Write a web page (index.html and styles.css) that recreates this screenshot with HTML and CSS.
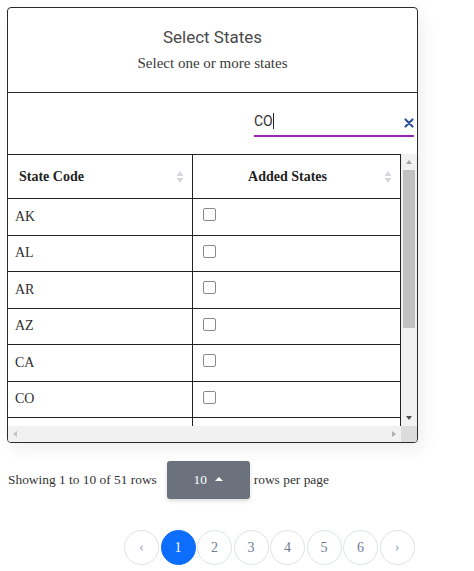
FILE: index.html
```html
<!DOCTYPE html>
<html>
<head>
<meta charset="utf-8">
<link rel="stylesheet" href="styles.css">
</head>
<body>
<div class="card">
  <div class="card-header">
    <div class="title">Select States</div>
    <div class="subtitle">Select one or more states</div>
  </div>
  <div class="search-row">
    <div class="search">
      <span class="search-text">CO<span class="caret-line"></span></span>
      <svg class="clear" width="10" height="10" viewBox="0 0 10 10"><path d="M1.5 1.5L8.5 8.5M8.5 1.5L1.5 8.5" stroke="#2f5596" stroke-width="2.2" stroke-linecap="round"/></svg>
    </div>
  </div>
  <div class="table-wrap">
    <div class="table-view">
      <table class="states">
        <thead>
          <tr>
            <th class="col-code"><span class="th-inner">State Code</span><span class="sort"><svg width="8" height="16" viewBox="0 0 8 16"><path d="M4 2L7.5 7H0.5Z" fill="#d3d6da"/><path d="M4 14L7.5 9H0.5Z" fill="#d3d6da"/></svg></span></th>
            <th class="col-added"><span class="th-inner">Added States</span><span class="sort"><svg width="8" height="16" viewBox="0 0 8 16"><path d="M4 2L7.5 7H0.5Z" fill="#d3d6da"/><path d="M4 14L7.5 9H0.5Z" fill="#d3d6da"/></svg></span></th>
          </tr>
        </thead>
        <tbody>
          <tr><td>AK</td><td><span class="cb"></span></td></tr>
          <tr><td>AL</td><td><span class="cb"></span></td></tr>
          <tr><td>AR</td><td><span class="cb"></span></td></tr>
          <tr><td>AZ</td><td><span class="cb"></span></td></tr>
          <tr><td>CA</td><td><span class="cb"></span></td></tr>
          <tr><td>CO</td><td><span class="cb"></span></td></tr>
          <tr><td></td><td></td></tr>
        </tbody>
      </table>
    </div>
    <div class="vscroll">
      <div class="arrow up"></div>
      <div class="thumb"></div>
      <div class="track"></div>
      <div class="arrow down"></div>
    </div>
    <div class="hscroll">
      <div class="arrow left"></div>
      <div class="arrow right"></div>
    </div>
    <div class="corner"></div>
  </div>
</div>

<div class="footer">
  <span class="showing">Showing 1 to 10 of 51 rows</span>
  <button class="page-size">10 <span class="up-caret"></span></button>
  <span class="per-page">rows per page</span>
</div>

<div class="pagination">
  <span class="page nav">&lsaquo;</span>
  <span class="page active">1</span>
  <span class="page">2</span>
  <span class="page">3</span>
  <span class="page">4</span>
  <span class="page">5</span>
  <span class="page">6</span>
  <span class="page nav">&rsaquo;</span>
</div>
</body>
</html>
```

FILE: styles.css
```css
html, body {
  margin: 0;
  padding: 0;
  background: #ffffff;
}

body {
  padding: 7px;
  font-family: "Liberation Serif", "Times New Roman", serif;
  font-size: 14px;
  color: #333;
}

.card {
  width: 411px;
  box-sizing: border-box;
  border: 1px solid #2b2b2b;
  border-radius: 4px;
  box-shadow: 4px 6px 18px rgba(0, 0, 0, 0.07);
  background: #fff;
  overflow: hidden;
}

.card-header {
  height: 85px;
  box-sizing: border-box;
  border-bottom: 1px solid #2b2b2b;
  padding-top: 19px;
  text-align: center;
}

.title {
  font-family: Roboto, "Noto Sans", sans-serif;
  font-size: 17px;
  line-height: 20px;
  color: #4a4a4a;
}

.subtitle {
  margin-top: 7px;
  font-size: 15px;
  line-height: 18px;
  color: #3a3a3a;
}

.search-row {
  height: 61px;
  box-sizing: border-box;
  display: flex;
  justify-content: flex-end;
  padding-top: 13px;
  padding-right: 3px;
}

.search {
  width: 160px;
  height: 31px;
  box-sizing: border-box;
  border-bottom: 2px solid #9a24b3;
  display: flex;
  align-items: center;
  justify-content: space-between;
}

.search-text {
  font-family: Roboto, "Noto Sans", sans-serif;
  font-size: 14px;
  color: #333;
  display: flex;
  align-items: center;
}

.caret-line {
  display: inline-block;
  width: 1px;
  height: 16px;
  background: #222;
}

.clear {
  margin-top: 4px;
}

.table-wrap {
  display: grid;
  grid-template-columns: 393px 16px;
  grid-template-rows: 272px 16px;
}

.table-view {
  overflow: hidden;
}

.states {
  width: 393px;
  border-collapse: collapse;
  table-layout: fixed;
}

.states th,
.states td {
  border-right: 1px solid #222;
  border-bottom: 1px solid #222;
}

.states thead tr {
  border-top: 1px solid #222;
}

.states th {
  height: 43px;
  padding: 0;
  font-weight: bold;
  font-size: 14px;
  color: #222;
  position: relative;
}

.col-code {
  width: 184px;
  text-align: left;
}

.col-code .th-inner {
  padding-left: 11px;
}

.col-added {
  text-align: center;
}

.col-added .th-inner {
  padding-right: 18px;
}

.sort {
  position: absolute;
  right: 8px;
  top: 14px;
}

.states td {
  height: 35.5px;
  padding: 0 0 0 7px;
  font-size: 14px;
  color: #2e2e2e;
  vertical-align: middle;
}

.cb {
  display: block;
  width: 11px;
  height: 11px;
  border: 1px solid #8a8a8a;
  border-radius: 2px;
  margin-left: 3px;
  margin-top: -4px;
}

.vscroll {
  background: #f1f1f1;
  display: flex;
  flex-direction: column;
  align-items: center;
}

.arrow {
  width: 0;
  height: 0;
}

.arrow.up {
  margin-top: 6px;
  border-left: 3.5px solid transparent;
  border-right: 3.5px solid transparent;
  border-bottom: 4px solid #a3a3a3;
  margin-bottom: 6px;
}

.thumb {
  width: 12px;
  height: 158px;
  background: #c1c1c1;
}

.track {
  flex: 1;
}

.arrow.down {
  border-left: 3.5px solid transparent;
  border-right: 3.5px solid transparent;
  border-top: 4px solid #505050;
  margin-bottom: 6px;
}

.hscroll {
  background: #f1f1f1;
  display: flex;
  align-items: center;
  justify-content: space-between;
  padding: 0 5px;
}

.arrow.left {
  border-top: 3.5px solid transparent;
  border-bottom: 3.5px solid transparent;
  border-right: 4px solid #c4c4c4;
}

.arrow.right {
  border-top: 3.5px solid transparent;
  border-bottom: 3.5px solid transparent;
  border-left: 4px solid #b0b0b0;
}

.corner {
  background: #dcdcdc;
}

.footer {
  margin-top: 18px;
  display: flex;
  align-items: center;
  padding-left: 1px;
}

.showing {
  font-size: 13.4px;
  color: #333;
}

.page-size {
  margin-left: 10px;
  width: 83px;
  height: 38px;
  border: none;
  border-radius: 3px;
  background: #6c727d;
  color: #fff;
  font-family: "Liberation Serif", "Times New Roman", serif;
  font-size: 13.4px;
  box-shadow: 0 2px 4px rgba(0, 0, 0, 0.15);
  display: flex;
  align-items: center;
  justify-content: center;
  gap: 8px;
  padding: 0;
}

.up-caret {
  width: 0;
  height: 0;
  border-left: 4px solid transparent;
  border-right: 4px solid transparent;
  border-bottom: 4px solid #fff;
  margin-top: -3px;
}

.per-page {
  margin-left: 4px;
  font-size: 13.4px;
  color: #333;
}

.pagination {
  margin-top: 31px;
  display: flex;
  gap: 1.5px;
  padding-left: 117px;
}

.page {
  width: 35px;
  height: 35px;
  box-sizing: border-box;
  border: 1px solid #dee2e6;
  border-radius: 50%;
  display: flex;
  align-items: center;
  justify-content: center;
  font-size: 14px;
  color: #6c7a94;
}

.page.nav {
  color: #9aa3b0;
}

.page.active {
  background: #0d6efd;
  border-color: #0d6efd;
  color: #fff;
}
```
